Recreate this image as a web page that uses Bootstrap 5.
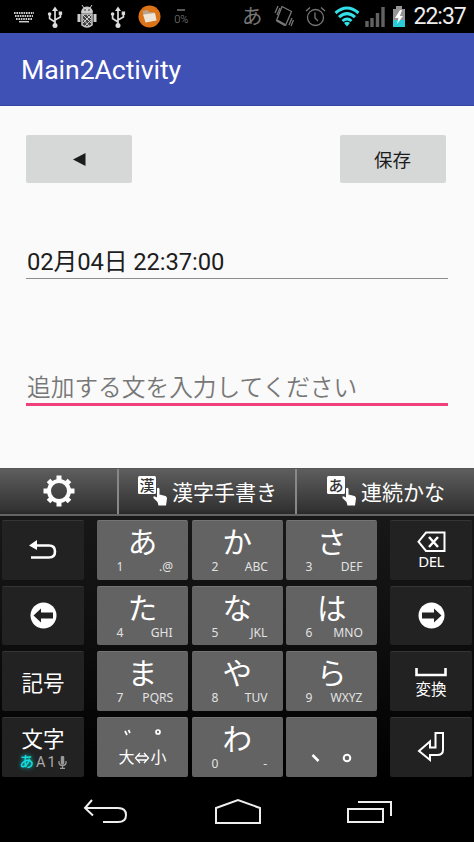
<!DOCTYPE html>
<html lang="ja">
<head>
<meta charset="utf-8">
<meta name="viewport" content="width=device-width, initial-scale=1">
<title>Main2Activity</title>
<link href="https://cdn.jsdelivr.net/npm/bootstrap@5.3.0/dist/css/bootstrap.min.css" rel="stylesheet">
<style>
body{width:474px;height:842px;overflow:hidden;background:#000;font-family:Roboto,"Noto Sans CJK JP",sans-serif}
svg{display:block;flex:none}
.status-bar{height:33px;background:#000;color:#fff;padding-left:8px}
.slot{width:31.5px;flex:none}
.slot-sm{width:24px;flex:none}
.right-side{margin-left:39.5px}
.load{font-size:11px;line-height:12px;color:#858585;font-weight:300}
.ime-mark{font-size:20.5px;line-height:30px;color:#777}
.clock{font-size:23px;line-height:33px;letter-spacing:-1px;padding-left:3px;color:#eee}
.app-bar{height:73px;background:#3f51b5;color:#fff;padding:3px 0 0 21px;font-size:26.7px;letter-spacing:-.1px;border-bottom:1px solid #3546a2}
.screen{height:362px;background:#fafafa;padding:29px 26px 0}
.actions{padding-right:2.5px}
.btn-raised{width:106px;height:48px;background:#d6d7d7;border:0;border-radius:2px;color:#1c1c1c;font-size:18.5px;padding:0}
.btn-raised:hover{background:#d0d0d0}
.save{padding-top:5px}
.field{height:34px;margin-top:62px;padding:0 0 5px 1px;border:0;border-bottom:1.5px solid #8c8c8c;border-radius:0;background:transparent;font-size:24px;line-height:27px;color:#1d1d1d}
.field:focus{box-shadow:none;background:transparent}
.field.date{font-size:23.8px;letter-spacing:-.1px}
.field.memo{height:38px;margin-top:89px;border-bottom:3px solid #f0407c;font-size:23.7px;padding:4px 0 0 1px;line-height:31px;font-weight:350}
.field.memo::placeholder{color:#777;opacity:1}
.keyboard{height:309px;background:linear-gradient(#1b1b1b,#111 45%,#000)}
.tool-strip{height:48px;border-top:1px solid #565656;border-bottom:2px solid #646464;background:linear-gradient(#5e5e5e,#333 90%,#292929);color:#fff;font-size:21px;display:grid;grid-template-columns:119px 178px 177px}
.tool{border-right:2px solid #888;gap:4px;padding-bottom:2px}
.tool:last-child{border-right:0}
.tool span{line-height:30px;padding-top:4px}
.keys{display:grid;grid-template-columns:91.3px 91px 91px 91px 91px;grid-template-rows:repeat(4,59.5px);column-gap:3.7px;row-gap:6.2px;padding:4px 0 0 2px}
.keycap{border-radius:2px;background:#636363;border-top:1px solid #747474;color:#fff;overflow:hidden}
.keycap.dark{width:82px;background:#222;border-top-color:#353535}
.keys>:nth-child(5n){margin-left:9px}
.kana{font-size:29.5px;line-height:34px;height:36px;text-align:center;padding-top:5px}
.legend{font-family:"Noto Sans","Open Sans",sans-serif;font-size:13px;line-height:15px;padding:2px 15px 0 19px;color:#e2e2e2}
.legend span{transform-origin:right;transform:scaleX(.93)}
.fnt22{font-size:21.5px;line-height:26px}
.fnt16{font-size:15.5px;line-height:18px}
.case-row{font-size:16px;line-height:24px}
.del{font-family:"Noto Sans",sans-serif;font-size:15px;line-height:17px;letter-spacing:-.5px}
.modes{font-size:14.5px;line-height:19px;color:#aaa;gap:2px}
.modes b{color:#18dede;font-weight:500;text-shadow:0 0 4px #0cc}
.nav-keys{height:65px;background:#000;padding:5px 81px 0 82px}
</style>
<script src="https://cdn.jsdelivr.net/npm/bootstrap@5.3.0/dist/js/bootstrap.bundle.min.js" defer></script>
</head>
<body>
<svg width="0" height="0" class="position-absolute" aria-hidden="true">
  <defs>
    <g id="usb" fill="none" stroke="#ddd" stroke-width="1.7">
      <path d="M8 4V20M8 16L2.6 12.500V8M8 14L13.400 11V7"/>
      <path d="M8 .5L11 5H5Z" fill="#ddd" stroke="none"/><circle cx="8" cy="19.500" r="2.500" fill="#ddd" stroke="none"/>
      <circle cx="2.600" cy="8" r="1.800" fill="#ddd" stroke="none"/><path d="M11.700 5.500h3.400v3.400h-3.400z" fill="#ddd" stroke="none"/>
    </g>
    <path id="hand" fill="#fff" d="M4 1Q5.500-.5 6.500 1.500V7L12.500 8.500Q14 9 14 11L13 18H5.500L4.500 14.500L.5 10.500Q-.5 9 1.500 8.700L4 10Z"/>
  </defs>
</svg>

<header class="status-bar d-flex align-items-center">
  <div class="slot d-flex justify-content-center"><svg width="20" height="12" viewBox="0 0 20 12"><path d="M0 2H20M1 5H19M2 8H18" stroke="#ccc" stroke-width="1.900" stroke-dasharray="1.600 .8"/><path d="M5 10.700H15" stroke="#ccc" stroke-width="1.500"/></svg></div>
  <div class="slot d-flex justify-content-center"><svg width="16" height="22"><use href="#usb"/></svg></div>
  <div class="slot d-flex justify-content-center"><svg width="20" height="24" viewBox="0 0 20 24"><path d="M4.500 7.500Q5 2 10 2T15.500 7.500ZM5 0L7 3M15 0L13 3" fill="#ccc" stroke="#ccc"/><path d="M5 9H15V20Q10 24 5 20Z" fill="#444" stroke="#ccc" stroke-width="1.500"/><path d="M6 10L14 18M6 14L12 21M10 10L14 14M14 10L6 18M14 15L8 21" stroke="#ccc"/><path d="M2 9V17M18 9V17" stroke="#ccc" stroke-width="3"/><circle cx="8" cy="5" r=".7"/><circle cx="12" cy="5" r=".7"/></svg></div>
  <div class="slot d-flex justify-content-center"><svg width="16" height="22"><use href="#usb"/></svg></div>
  <div class="slot d-flex justify-content-center"><svg width="23" height="23" viewBox="0 0 23 23"><circle cx="11.500" cy="11.500" r="11" fill="#dc7417"/><path d="M4.500 6L9.500 5L11 7L16.500 7.500L18.500 15L8 17.500Z" fill="#b9a391"/><path d="M5 9.500L17 8L18.500 15.500L7.500 17.500Z" fill="#eee4d8"/></svg></div>
  <div class="slot load text-center"><svg class="mx-auto" width="8" height="6"><path d="M0 2H8" stroke="#777" stroke-width="1.500"/></svg>0%</div>
  <div class="slot ime-mark right-side text-center">あ</div>
  <div class="slot d-flex justify-content-center"><svg width="20" height="23" viewBox="0 0 20 23" fill="none" stroke="#777" stroke-width="1.300"><path d="M8 1.500L17.500 6.500L11.500 20.500L2.500 15.500Z" stroke-linejoin="round"/><path d="M3 15.500L11 20" stroke-width="2.500"/><path d="M1 8L4 1M3 10L6 3M15 20L18 13M17 21L19.500 15"/></svg></div>
  <div class="slot d-flex justify-content-center"><svg width="21" height="21" viewBox="0 0 21 21" fill="none" stroke="#777" stroke-width="1.300"><circle cx="10.500" cy="11.500" r="8"/><path d="M10 6.500V12L13 15M1 5L5 1.500M16 1.500L20 5"/></svg></div>
  <div class="slot d-flex justify-content-center"><svg width="26" height="21" viewBox="0 0 26 21" fill="none" stroke="#33dfe9" stroke-width="3"><path d="M1.500 7Q13-3 24.500 7M5 11.200Q13 4 21 11.200M8.500 15Q13 11 17.500 15"/><path d="M10 17Q13 14.500 16 17L13 20.500Z" fill="#33dfe9" stroke="none"/></svg></div>
  <div class="slot-sm d-flex justify-content-center"><svg width="20" height="20"><path d="M2 20V14M7 20V11M12.500 20V6M18 20V0" stroke="#626262" stroke-width="3.400"/></svg></div>
  <div class="slot-sm d-flex justify-content-center"><svg width="12" height="21"><path d="M3 0H9V3H12V21H0V3H3Z" fill="#959595"/><path d="M0 14H12V21H0Z" fill="#28cbd7"/><path d="M7 4L2 12H5.500L4 18L10 10H7L9 4Z" fill="#fff"/></svg></div>
  <div class="clock">22:37</div>
</header>

<div class="app-bar d-flex align-items-center">Main2Activity</div>

<main class="screen">
  <div class="actions d-flex justify-content-between">
    <button class="btn btn-raised d-flex align-items-center justify-content-center" aria-label="戻る"><svg width="13" height="13"><path d="M0 6.500L12.500 0V13Z" fill="#1c1c1c"/></svg></button>
    <button class="btn btn-raised save">保存</button>
  </div>
  <input class="form-control field date" value="02月04日 22:37:00">
  <input class="form-control field memo" placeholder="追加する文を入力してください">
</main>

<section class="keyboard">
  <div class="tool-strip">
    <div class="tool d-flex align-items-center justify-content-center"><svg width="32" height="32" viewBox="-16 -16 32 32"><circle r="10" fill="none" stroke="#fff" stroke-width="4"/><path d="M0-15.500V-10M0 15.500V10M-15.500 0H-10M15.500 0H10M-10.500-10.500L-7-7M10.500 10.500L7 7M10.500-10.500L7-7M-10.500 10.500L-7 7" stroke="#fff" stroke-width="5"/></svg></div>
    <div class="tool d-flex align-items-center justify-content-center"><svg width="31" height="32" viewBox="0 0 31 32"><rect x="1" y="1" width="18" height="18" rx="1.500" fill="#fff"/><text x="10" y="15.500" font-size="15" font-weight="500" text-anchor="middle" fill="#333">漢</text><g transform="translate(16 12.500)"><use href="#hand"/></g></svg><span>漢字手書き</span></div>
    <div class="tool d-flex align-items-center justify-content-center"><svg width="31" height="32" viewBox="0 0 31 32"><rect x="1" y="1" width="18" height="18" rx="1.500" fill="#fff"/><text x="10" y="15.500" font-size="15" font-weight="500" text-anchor="middle" fill="#333">あ</text><g transform="translate(16 12.500)"><use href="#hand"/></g></svg><span>連続かな</span></div>
  </div>
  <div class="keys">
    <div class="keycap dark d-flex align-items-center justify-content-center"><svg width="28" height="20" viewBox="0 0 28 20"><path d="M7 5.500H20Q26 5.500 26 11.500T20 17.500H2" fill="none" stroke="#fff" stroke-width="2.600"/><path d="M0 5.500L8 0V10Z" fill="#fff"/></svg></div>
    <div class="keycap"><div class="kana">あ</div><div class="legend d-flex justify-content-between"><span>1</span><span>.@</span></div></div>
    <div class="keycap"><div class="kana">か</div><div class="legend d-flex justify-content-between"><span>2</span><span>ABC</span></div></div>
    <div class="keycap"><div class="kana">さ</div><div class="legend d-flex justify-content-between"><span>3</span><span>DEF</span></div></div>
    <div class="keycap dark d-flex flex-column align-items-center justify-content-center"><svg width="29" height="22" viewBox="0 0 29 22" fill="none" stroke="#fff" stroke-width="2"><path d="M9 1.500H27.500V20H9L1.500 10.700Z"/><path d="M12 6L21 16M21 6L12 16" stroke-width="2.500"/></svg><span class="del">DEL</span></div>

    <div class="keycap dark d-flex align-items-center justify-content-center"><svg width="27" height="27" viewBox="0 0 27 27"><circle cx="13.500" cy="13.500" r="13" fill="#fff"/><path d="M3.500 13.500L11 6.500V10.500H23V16.500H11V20.500Z" fill="#222"/></svg></div>
    <div class="keycap"><div class="kana">た</div><div class="legend d-flex justify-content-between"><span>4</span><span>GHI</span></div></div>
    <div class="keycap"><div class="kana">な</div><div class="legend d-flex justify-content-between"><span>5</span><span>JKL</span></div></div>
    <div class="keycap"><div class="kana">は</div><div class="legend d-flex justify-content-between"><span>6</span><span>MNO</span></div></div>
    <div class="keycap dark d-flex align-items-center justify-content-center"><svg width="27" height="27" viewBox="0 0 27 27"><circle cx="13.500" cy="13.500" r="13" fill="#fff"/><path d="M23.500 13.500L16 6.500V10.500H4V16.500H16V20.500Z" fill="#222"/></svg></div>

    <div class="keycap dark d-flex align-items-center justify-content-center fnt22 pt-1">記号</div>
    <div class="keycap"><div class="kana">ま</div><div class="legend d-flex justify-content-between"><span>7</span><span>PQRS</span></div></div>
    <div class="keycap"><div class="kana">や</div><div class="legend d-flex justify-content-between"><span>8</span><span>TUV</span></div></div>
    <div class="keycap"><div class="kana">ら</div><div class="legend d-flex justify-content-between"><span>9</span><span>WXYZ</span></div></div>
    <div class="keycap dark d-flex flex-column align-items-center justify-content-center gap-1 fnt16 pt-1"><svg width="32" height="9"><path d="M1.500 0V7H30.500V0" fill="none" stroke="#fff" stroke-width="2.600"/></svg>変換</div>

    <div class="keycap dark d-flex flex-column align-items-center justify-content-center pt-1"><span class="fnt22">文字</span><div class="modes d-flex align-items-center"><b>あ</b><span>A</span><span>1</span><svg width="9" height="13" viewBox="0 0 9 13" fill="none" stroke="#999"><path d="M4.500 1.500V7" stroke-width="3.500" stroke-linecap="round"/><path d="M1 5V7Q1.500 9.500 4.500 9.500T8 7V5M4.500 9.500V12M2 12.300H7" stroke-width="1.300"/></svg></div></div>
    <div class="keycap d-flex flex-column align-items-center justify-content-center"><svg width="40" height="22" viewBox="0 0 40 22" fill="none" stroke="#fff" stroke-width="1.700"><path d="M3 7L5 11M6.500 6L8 9"/><circle cx="36" cy="8" r="2"/></svg><div class="case-row d-flex align-items-center"><span>大</span><svg width="16" height="12" viewBox="0 0 16 12" fill="none" stroke="#fff" stroke-width="1.300"><path d="M6 1L1.500 6L6 11M10 1L14.500 6L10 11M3.500 4H12.500M3.500 8H12.500"/></svg><span>小</span></div></div>
    <div class="keycap"><div class="kana">わ</div><div class="legend d-flex justify-content-between"><span>0</span><span>-</span></div></div>
    <div class="keycap d-flex align-items-end justify-content-center"><svg width="42" height="26" viewBox="0 0 42 26" fill="none" stroke="#fff" stroke-width="2"><path d="M1.500 4L7.500 10" stroke-width="2.500"/><circle cx="36" cy="7" r="3.300"/></svg></div>
    <div class="keycap dark d-flex align-items-center justify-content-center"><svg width="28" height="32" viewBox="0 0 28 32"><path d="M18.500 2H26V19Q26 24 20 24H13V29L2 20L13 10.500V16.500H18.500Z" fill="none" stroke="#fff" stroke-width="2"/></svg></div>
  </div>
</section>

<nav class="nav-keys d-flex align-items-center justify-content-between">
  <svg width="46" height="26" viewBox="0 0 46 26" fill="none" stroke="#eee" stroke-width="2"><path d="M3 9H36Q44 9 44 16T36 23H21M10 1L3 9L11 16.500"/></svg>
  <svg width="50" height="28" viewBox="0 0 50 28" fill="none" stroke="#eee" stroke-width="2"><path d="M3 25V10L25 2L47 10V25Z"/></svg>
  <svg width="46" height="26" viewBox="0 0 46 26" fill="none" stroke="#eee" stroke-width="2"><path d="M1 10H36V23H1ZM11 3H44V17"/></svg>
</nav>
</body>
</html>
